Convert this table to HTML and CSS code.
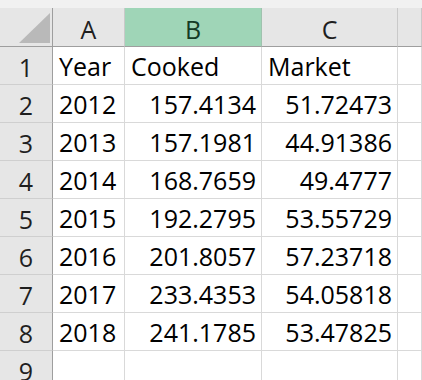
FILE: index.html
```html
<!DOCTYPE html>
<html>
<head>
<meta charset="utf-8">
<link rel="stylesheet" href="styles.css">
</head>
<body>
<div class="strip"></div>
<div class="sheet">
  <div class="hdr corner"><svg width="31" height="30" viewBox="0 0 31 30"><polygon points="0,30 31,0 31,30" fill="#b9b9b9"/></svg></div>
  <div class="hdr col">A</div>
  <div class="hdr col sel">B</div>
  <div class="hdr col">C</div>
  <div class="hdr col last"></div>

  <div class="hdr row">1</div><div class="cell">Year</div><div class="cell">Cooked</div><div class="cell">Market</div><div class="cell"></div>
  <div class="hdr row">2</div><div class="cell">2012</div><div class="cell num">157.4134</div><div class="cell num">51.72473</div><div class="cell"></div>
  <div class="hdr row">3</div><div class="cell">2013</div><div class="cell num">157.1981</div><div class="cell num">44.91386</div><div class="cell"></div>
  <div class="hdr row">4</div><div class="cell">2014</div><div class="cell num">168.7659</div><div class="cell num">49.4777</div><div class="cell"></div>
  <div class="hdr row">5</div><div class="cell">2015</div><div class="cell num">192.2795</div><div class="cell num">53.55729</div><div class="cell"></div>
  <div class="hdr row">6</div><div class="cell">2016</div><div class="cell num">201.8057</div><div class="cell num">57.23718</div><div class="cell"></div>
  <div class="hdr row">7</div><div class="cell">2017</div><div class="cell num">233.4353</div><div class="cell num">54.05818</div><div class="cell"></div>
  <div class="hdr row">8</div><div class="cell">2018</div><div class="cell num">241.1785</div><div class="cell num">53.47825</div><div class="cell"></div>
  <div class="hdr row">9</div><div class="cell"></div><div class="cell"></div><div class="cell"></div><div class="cell"></div>
</div>
</body>
</html>
```

FILE: styles.css
```css
html, body {
  margin: 0;
  padding: 0;
  width: 422px;
  height: 380px;
  overflow: hidden;
  background: #ffffff;
  font-family: "Open Sans", "Liberation Sans", sans-serif;
}

.strip {
  height: 8px;
  background: #f1f1f1;
}

.sheet {
  display: grid;
  grid-template-columns: 53px 72px 137px 136px 1fr;
  grid-template-rows: 39px repeat(9, 38px);
}

.sheet > div {
  box-sizing: border-box;
  white-space: nowrap;
  overflow: hidden;
}

.hdr {
  background: #e6e6e6;
  color: #1f1f1f;
  font-size: 25px;
}

.col {
  border-right: 1px solid #c9c9c9;
  border-bottom: 1px solid #9e9e9e;
  text-align: center;
  line-height: 38px;
  padding-top: 2px;
}

.col.sel {
  background: #9fd5b7;
  color: #143a24;
  border-right-color: #9fc2ae;
}

.corner {
  border-right: 1px solid #9e9e9e;
  border-bottom: 1px solid #9e9e9e;
  display: flex;
  align-items: flex-end;
  justify-content: flex-end;
  padding: 0 2px 3px 0;
}

.row {
  border-right: 1px solid #9e9e9e;
  border-bottom: 1px solid #cfcfcf;
  text-align: center;
  line-height: 37px;
  padding-top: 2px;
}

.cell {
  border-right: 1px solid #d9d9d9;
  border-bottom: 1px solid #d9d9d9;
  font-size: 25px;
  line-height: 37px;
  color: #000000;
  padding: 1px 6px 0 6px;
}

.cell.num {
  text-align: right;
  padding-right: 5px;
}
```
